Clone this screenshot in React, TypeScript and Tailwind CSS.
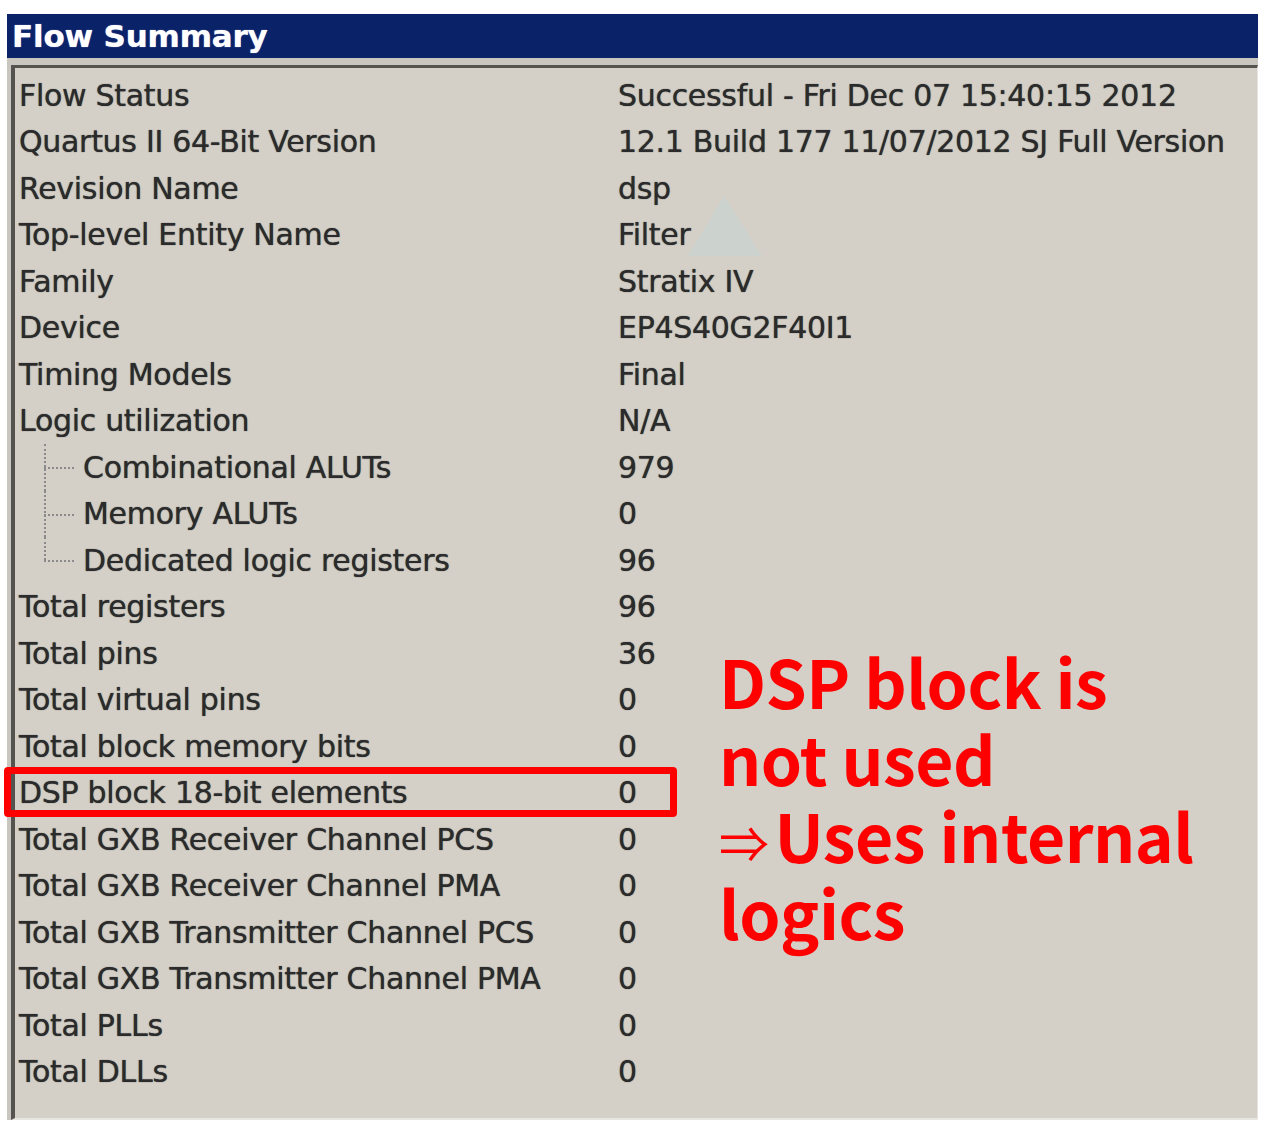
import React from 'react';

type Row = { label: string; value: string; child?: boolean };

const rows: Row[] = [
  { label: 'Flow Status', value: 'Successful - Fri Dec 07 15:40:15 2012' },
  { label: 'Quartus II 64-Bit Version', value: '12.1 Build 177 11/07/2012 SJ Full Version' },
  { label: 'Revision Name', value: 'dsp' },
  { label: 'Top-level Entity Name', value: 'Filter' },
  { label: 'Family', value: 'Stratix IV' },
  { label: 'Device', value: 'EP4S40G2F40I1' },
  { label: 'Timing Models', value: 'Final' },
  { label: 'Logic utilization', value: 'N/A' },
  { label: 'Combinational ALUTs', value: '979', child: true },
  { label: 'Memory ALUTs', value: '0', child: true },
  { label: 'Dedicated logic registers', value: '96', child: true },
  { label: 'Total registers', value: '96' },
  { label: 'Total pins', value: '36' },
  { label: 'Total virtual pins', value: '0' },
  { label: 'Total block memory bits', value: '0' },
  { label: 'DSP block 18-bit elements', value: '0' },
  { label: 'Total GXB Receiver Channel PCS', value: '0' },
  { label: 'Total GXB Receiver Channel PMA', value: '0' },
  { label: 'Total GXB Transmitter Channel PCS', value: '0' },
  { label: 'Total GXB Transmitter Channel PMA', value: '0' },
  { label: 'Total PLLs', value: '0' },
  { label: 'Total DLLs', value: '0' },
];

function TreeBranch({ last }: { last: boolean }) {
  return (
    <div className="relative w-[64px] h-full shrink-0">
      {/* vertical dotted connector */}
      <div
        className={`absolute left-[25px] top-0 border-l-2 border-dotted border-[#8a8a8a] ${
          last ? 'h-1/2' : 'h-full'
        }`}
      />
      <div className="absolute left-[25px] top-1/2 w-[30px] border-t-2 border-dotted border-[#8a8a8a]" />
    </div>
  );
}

export default function App() {
  return (
    <div className="bg-white w-[1269px] h-[1138px] pt-[14px] pl-[7px] relative">
      <div className="w-[1251px] [font-family:'DejaVu_Sans',sans-serif]">
        {/* title bar */}
        <div className="h-[44px] bg-[#0a2268] flex items-center pl-[5px]">
          <span className="text-white font-bold text-[31px] leading-none tracking-[-0.2px] [text-shadow:0_0_1px_#c8d0f0]">
            Flow Summary
          </span>
        </div>
        {/* sunken body */}
        <div className="bg-[#c9c6bf] pt-[7px] pl-[4px]">
          <div className="bg-[#d4d0c8] border-t-[3px] border-l-[4px] border-[#55534f] border-r border-r-[#e6e4de] border-b-[2px] border-b-[#e8e6e0] h-[1055px] pt-[4px] pl-[4px] text-[#2b2b2b] text-[30px] tracking-[-0.3px] [text-shadow:0_0_1px_#3a3a3a]">
            {rows.map((r, i) => {
              const nextChild = rows[i + 1]?.child;
              return (
                <div key={r.label} className="flex h-[46.5px] items-center">
                  <div className="w-[599px] flex items-center h-full shrink-0">
                    {r.child && <TreeBranch last={!nextChild} />}
                    <span className="whitespace-nowrap">{r.label}</span>
                  </div>
                  <span className="whitespace-nowrap">{r.value}</span>
                </div>
              );
            })}
          </div>
        </div>
      </div>

      {/* faint triangle artifact beside "Filter" */}
      <svg className="absolute left-[688px] top-[196px]" width="74" height="60" viewBox="0 0 74 60">
        <polygon points="36,0 74,60 0,60" fill="#ccd2ce" />
      </svg>

      {/* highlight box on DSP row */}
      <div className="absolute left-[4px] top-[767px] w-[673px] h-[50px] border-[7px] border-[#ff0000] rounded-[4px]" />

      {/* annotation */}
      <div className="absolute left-[719px] top-[642px] text-[#ff0000] font-bold text-[66px] leading-[77px] tracking-[-0.5px] [font-family:'Noto_Sans_CJK_JP',sans-serif]">
        <div className="h-[77px]">DSP block is</div>
        <div className="h-[77px]">not used</div>
        <div className="h-[77px]">
          <span className="font-normal text-[50px] mr-[6px]">⇒</span>Uses internal
        </div>
        <div className="h-[77px]">logics</div>
      </div>
    </div>
  );
}
